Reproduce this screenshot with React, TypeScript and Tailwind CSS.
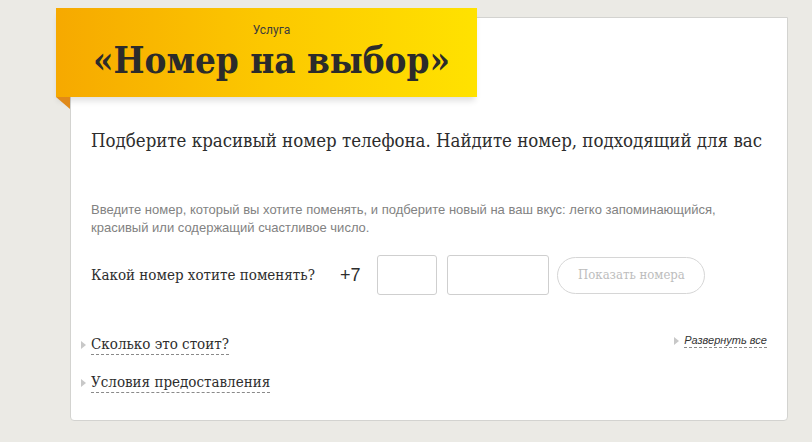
const serif = { fontFamily: '"DejaVu Serif Condensed", "DejaVu Serif", serif', fontStretch: "condensed" };

const Arrow = () => (
  <span className="mr-[5px] inline-block h-0 w-0 border-y-[4px] border-l-[5px] border-y-transparent border-l-[#c8c8c8]" />
);

const App = () => {
  return (
    <div className="min-h-[442px] w-[812px] overflow-hidden bg-[#ebeae5] pt-[17px] pl-[70px]">
      <div className="relative h-[404px] w-[718px] rounded-b-[4px] border border-[#d3d3d0] bg-white">
        {/* ribbon */}
        <div className="absolute -left-[15px] -top-[10px]">
          <div className="flex h-[89px] w-[421px] flex-col items-center bg-gradient-to-r from-[#f6a900] via-[#fcc800] to-[#ffe200] pl-[10px] shadow-[0_6px_6px_-2px_rgba(0,0,0,0.12)]">
            <span className="mt-[14px] text-[12px] leading-[16px] text-[#3c3c3c] font-['Roboto',sans-serif]">
              Услуга
            </span>
            <span
              className="mt-[3px] text-[36.5px] leading-[40px] font-bold text-[#2b2b2b]"
              style={serif}
            >
              «Номер на выбор»
            </span>
          </div>
          <div className="h-0 w-0 border-t-[12px] border-l-[14px] border-t-[#e08a1a] border-l-transparent" />
        </div>

        <div className="pl-[20px] pt-[111px]">
          <h1 className="whitespace-nowrap text-[18.5px] leading-[24px] text-[#2d2d2d]" style={serif}>
            Подберите красивый номер телефона. Найдите номер, подходящий для вас
          </h1>

          <p className="mt-[48px] w-[640px] text-[13px] leading-[18px] text-[#828282] font-['Liberation_Sans',Arial,sans-serif]">
            Введите номер, который вы хотите поменять, и подберите новый на ваш вкус: легко запоминающийся,
            красивый или содержащий счастливое число.
          </p>

          <div className="mt-[18px] flex items-center">
            <span className="text-[15px] text-[#2d2d2d]" style={serif}>
              Какой номер хотите поменять?
            </span>
            <span className="ml-[25px] text-[18px] text-[#2d2d2d] font-['Liberation_Sans',Arial,sans-serif]">+7</span>
            <div className="ml-[17px] h-[40px] w-[60px] rounded-[3px] border border-[#cfcfcf]" />
            <div className="ml-[10px] h-[40px] w-[102px] rounded-[3px] border border-[#cfcfcf]" />
            <button
              className="ml-[8px] h-[37px] w-[148px] rounded-full border border-[#d6d6d6] text-[13px] text-[#bdbdbd]"
              style={serif}
            >
              Показать номера
            </button>
          </div>

          <div className="mt-[40px] flex items-start justify-between pr-[20px]">
            <div className="-ml-[10px] flex items-center">
              <Arrow />
              <span className="border-b border-dashed border-[#8a8a8a] text-[15px] leading-[19px] text-[#2d2d2d]" style={serif}>
                Сколько это стоит?
              </span>
            </div>
            <div className="-mt-[2px] flex items-center">
              <Arrow />
              <span className="border-b border-dashed border-[#8a8a8a] text-[11px] italic leading-[14px] text-[#333] font-['Liberation_Sans',Arial,sans-serif]">
                Развернуть все
              </span>
            </div>
          </div>

          <div className="-ml-[10px] mt-[18px] flex items-center">
            <Arrow />
            <span className="border-b border-dashed border-[#8a8a8a] text-[15px] leading-[19px] text-[#2d2d2d]" style={serif}>
              Условия предоставления
            </span>
          </div>
        </div>
      </div>
    </div>
  );
};

export default App;
